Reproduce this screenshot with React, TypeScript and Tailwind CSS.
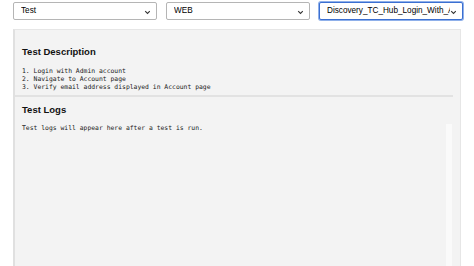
import React from "react";

const Chevron = () => (
  <svg width="7" height="5" viewBox="0 0 7 5" className="absolute right-[5px] top-[7px]">
    <path d="M1.2 1.2 L3.5 3.5 L5.8 1.2" fill="none" stroke="#333" strokeWidth="1.1" />
  </svg>
);

function Sel({ label, focus }: { label: string; focus?: boolean }) {
  return (
    <div
      className={
        focus
          ? "relative w-[144px] h-[18px] rounded-[2px] border border-[#3b6fd1] shadow-[0_0_0_1px_#8fb0ea] bg-white flex items-center pl-[7px] text-[8.2px] text-black overflow-hidden whitespace-nowrap"
          : "relative w-[144px] h-[18px] rounded-[2px] border border-[#b5b5b5] bg-white flex items-center pl-[7px] text-[8.2px] text-black overflow-hidden whitespace-nowrap"
      }
      style={{ fontFamily: "Arial, 'Liberation Sans', sans-serif" }}
    >
      <span className="block w-[123px] overflow-hidden">{label}</span>
      <Chevron />
    </div>
  );
}

const mono = { fontFamily: "'DejaVu Sans Mono', 'Liberation Mono', monospace" };

export default function App() {
  return (
    <div className="w-[474px] h-[266px] bg-white overflow-hidden pl-[13px] pt-[2px]" style={{ fontFamily: "'Liberation Sans', Arial, sans-serif" }}>
      <div className="flex gap-[9px]">
        <Sel label="Test" />
        <Sel label="WEB" />
        <Sel label="Discovery_TC_Hub_Login_With_Admin" focus />
      </div>
      <div className="mt-[9px] w-[448px] h-[240px] bg-[#f3f3f3] border border-[#e6e6e6] border-l-2 border-l-[#e0e0e0] relative">
        <div className="pl-[7px] pt-[16px] pr-[8px]">
          <div className="text-[9.5px] font-bold text-[#111] leading-[12px]">Test Description</div>
          <pre className="mt-[9px] text-[6.4px] leading-[8px] text-[#1a1a1a]" style={mono}>
{`1. Login with Admin account
2. Navigate to Account page
3. Verify email address displayed in Account page`}
          </pre>
        </div>
        <div className="mt-[4px] mr-[7px] h-[2px] bg-[#e2e2e2]" />
        <div className="pl-[7px] pt-[7px] flex">
          <div className="flex-1">
            <div className="text-[9.5px] font-bold text-[#111] leading-[12px]">Test Logs</div>
            <div className="mt-[8px] text-[6.4px] leading-[8px] text-[#1a1a1a]" style={mono}>
              Test logs will appear here after a test is run.
            </div>
          </div>
          <div className="mt-[20px] mr-[8px] w-[6px] h-[200px] bg-[#fafafa]" />
        </div>
      </div>
    </div>
  );
}
